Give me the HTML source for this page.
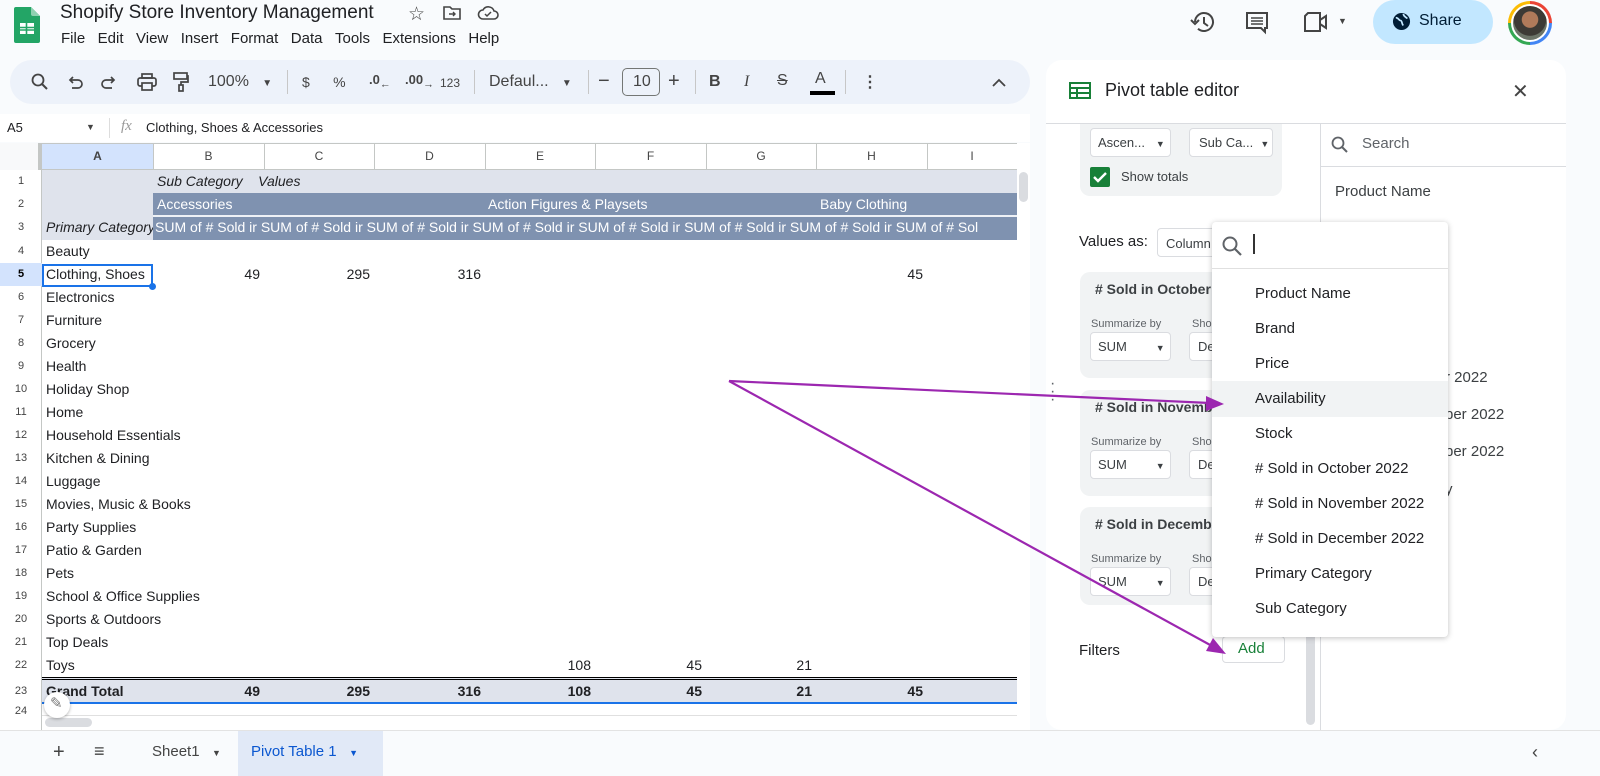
<!DOCTYPE html>
<html><head><meta charset="utf-8"><style>
*{box-sizing:border-box;margin:0;padding:0}
body{width:1600px;height:776px;overflow:hidden;background:#f9fbfd;font-family:"Liberation Sans",Arial,sans-serif;position:relative;color:#202124}
.a{position:absolute}
.t{position:absolute;white-space:nowrap}
.cell{position:absolute;font-size:14px;line-height:23px;white-space:nowrap;overflow:hidden}
.ic{position:absolute}
</style></head><body>
<svg class="ic" style="left:14px;top:7px" width="26" height="36" viewBox="0 0 26 36"><path d="M2 0h15l9 9v25a2 2 0 0 1-2 2H2a2 2 0 0 1-2-2V2a2 2 0 0 1 2-2z" fill="#23a566"/><path d="M17 0l9 9h-7a2 2 0 0 1-2-2z" fill="#8ed1b1"/><rect x="6" y="16" width="14" height="11" fill="#fff"/><path d="M6 20.5h14M6 23h14M12.5 16v11" stroke="#23a566" stroke-width="1.6"/></svg>
<div class="t" style="left:60px;top:2px;font-size:19px">Shopify Store Inventory Management</div>
<div class="t" style="left:408px;top:3px;font-size:19px;color:#444">☆</div>
<svg class="ic" style="left:443px;top:6px" width="18" height="14" viewBox="0 0 18 14"><path d="M1 1h6l2 2h8v10H1z" fill="none" stroke="#444" stroke-width="1.6"/><path d="M6 8h6M10 6l2 2-2 2" fill="none" stroke="#444" stroke-width="1.4"/></svg>
<svg class="ic" style="left:477px;top:5px" width="22" height="15" viewBox="0 0 22 15"><path d="M6 14h11a4 4 0 0 0 0-8 6 6 0 0 0-11-1 4.5 4.5 0 0 0 0 9z" fill="none" stroke="#444" stroke-width="1.6"/><path d="M8 9l2 2 4-4" fill="none" stroke="#444" stroke-width="1.5"/></svg>
<div class="t" style="left:61px;top:30px;font-size:15px">File&nbsp;&nbsp;&nbsp;Edit&nbsp;&nbsp;&nbsp;View&nbsp;&nbsp;&nbsp;Insert&nbsp;&nbsp;&nbsp;Format&nbsp;&nbsp;&nbsp;Data&nbsp;&nbsp;&nbsp;Tools&nbsp;&nbsp;&nbsp;Extensions&nbsp;&nbsp;&nbsp;Help</div>
<svg class="ic" style="left:1190px;top:10px" width="26" height="24" viewBox="0 0 26 24"><path d="M5 12a9 9 0 1 1 3 6.7" fill="none" stroke="#444" stroke-width="2"/><path d="M1 10l4 4 4-4" fill="none" stroke="#444" stroke-width="2"/><path d="M14 7v6l4 3" fill="none" stroke="#444" stroke-width="2"/></svg>
<svg class="ic" style="left:1245px;top:11px" width="24" height="24" viewBox="0 0 24 24"><path d="M2 2h20v15h-2v4l-4-4H2z" fill="none" stroke="#444" stroke-width="2"/><path d="M6 7h12M6 10h12M6 13h12" stroke="#444" stroke-width="1.6"/></svg>
<svg class="ic" style="left:1303px;top:12px" width="26" height="20" viewBox="0 0 26 20"><path d="M2 4l3-3h12v18H2z" fill="none" stroke="#444" stroke-width="2"/><path d="M17 8l6-4v12l-6-4" fill="none" stroke="#444" stroke-width="2"/></svg>
<div class="t" style="left:1338px;top:16px;font-size:9px;color:#444">▼</div>
<div class="a" style="left:1373px;top:0;width:120px;height:44px;border-radius:22px;background:#c2e7ff"></div>
<svg class="ic" style="left:1392px;top:12px" width="19" height="19" viewBox="0 0 20 20"><circle cx="10" cy="10" r="9" fill="#001d35"/><path d="M4 6c3 0 3 3 5 3s1 4 3 5M12 2c0 3 3 3 4 5" fill="none" stroke="#c2e7ff" stroke-width="1.8"/></svg>
<div class="t" style="left:1419px;top:12px;font-size:16px;color:#001d35">Share</div>
<div class="a" style="left:1508px;top:1px;width:44px;height:44px;border-radius:50%;background:conic-gradient(#ea4335 0 25%,#4285f4 25% 50%,#34a853 50% 75%,#fbbc05 75%)"></div>
<div class="a" style="left:1511px;top:4px;width:38px;height:38px;border-radius:50%;background:#fff"></div>
<div class="a" style="left:1513px;top:6px;width:34px;height:34px;border-radius:50%;background:radial-gradient(circle at 50% 40%,#b07a5a 0 30%,#3d3a35 32% 60%,#6c7468 62%)"></div>
<div class="a" style="left:10px;top:60px;width:1020px;height:44px;border-radius:22px;background:#edf2fa"></div>
<svg class="ic" style="left:30px;top:72px" width="20" height="20" viewBox="0 0 20 20"><circle cx="8" cy="8" r="5.5" fill="none" stroke="#444" stroke-width="1.8"/><path d="M12 12l5 5" stroke="#444" stroke-width="2"/></svg>
<svg class="ic" style="left:67px;top:75px" width="50" height="16" viewBox="0 0 50 16"><path d="M4 5h7a4 4 0 0 1 0 8H5M6 2L3 5l3 3" fill="none" stroke="#444" stroke-width="1.7"/><path d="M46 5h-7a4 4 0 0 0 0 8h6M44 2l3 3-3 3" fill="none" stroke="#444" stroke-width="1.7"/></svg>
<svg class="ic" style="left:137px;top:73px" width="20" height="18" viewBox="0 0 20 18"><rect x="5" y="1" width="10" height="4" fill="none" stroke="#444" stroke-width="1.7"/><rect x="1" y="5" width="18" height="8" rx="2" fill="none" stroke="#444" stroke-width="1.7"/><rect x="5" y="10" width="10" height="7" fill="#edf2fa" stroke="#444" stroke-width="1.7"/></svg>
<svg class="ic" style="left:173px;top:72px" width="16" height="20" viewBox="0 0 16 20"><rect x="1" y="1" width="13" height="6" fill="none" stroke="#444" stroke-width="1.7"/><path d="M14 4h1v6H8v3" fill="none" stroke="#444" stroke-width="1.7"/><rect x="6" y="13" width="4" height="6" fill="none" stroke="#444" stroke-width="1.7"/></svg>
<div class="t" style="left:208px;top:73px;font-size:16px;color:#444">100%&nbsp;&nbsp;&nbsp;<span style="font-size:10px">▼</span></div>
<div class="a" style="left:287px;top:70px;width:1px;height:24px;background:#c7c7c7"></div>
<div class="t" style="left:302px;top:74px;font-size:14px;color:#444">$&nbsp;&nbsp;&nbsp;&nbsp;&nbsp;&nbsp;%</div>
<div class="t" style="left:369px;top:72px;font-size:13px;color:#444;font-weight:bold">.0<sub>←</sub></div>
<div class="t" style="left:405px;top:72px;font-size:13px;color:#444;font-weight:bold">.00<sub>→</sub></div>
<div class="t" style="left:440px;top:76px;font-size:12px;color:#444">123</div>
<div class="a" style="left:474px;top:70px;width:1px;height:24px;background:#c7c7c7"></div>
<div class="t" style="left:489px;top:73px;font-size:16px;color:#444">Defaul...&nbsp;&nbsp;&nbsp;<span style="font-size:10px">▼</span></div>
<div class="a" style="left:588px;top:70px;width:1px;height:24px;background:#c7c7c7"></div>
<div class="t" style="left:598px;top:70px;font-size:20px;color:#444">−</div>
<div class="a" style="left:622px;top:68px;width:38px;height:28px;border:1px solid #747775;border-radius:5px"></div>
<div class="t" style="left:633px;top:73px;font-size:16px;color:#444">10</div>
<div class="t" style="left:668px;top:70px;font-size:20px;color:#444">+</div>
<div class="a" style="left:695px;top:70px;width:1px;height:24px;background:#c7c7c7"></div>
<div class="t" style="left:709px;top:73px;font-size:16px;color:#444;font-weight:bold">B</div>
<div class="t" style="left:744px;top:73px;font-size:16px;color:#444;font-style:italic;font-family:'Liberation Serif'">I</div>
<div class="t" style="left:777px;top:72px;font-size:16px;color:#444;text-decoration:line-through">S</div>
<div class="t" style="left:815px;top:70px;font-size:16px;color:#444">A</div>
<div class="a" style="left:810px;top:91px;width:25px;height:4px;background:#000"></div>
<div class="a" style="left:845px;top:70px;width:1px;height:24px;background:#c7c7c7"></div>
<div class="t" style="left:862px;top:72px;font-size:16px;color:#444;font-weight:bold">⋮</div>
<svg class="ic" style="left:992px;top:78px" width="14" height="9"><path d="M1 8l6-6 6 6" fill="none" stroke="#444" stroke-width="1.8"/></svg>
<div class="a" style="left:0;top:114px;width:1030px;height:28px;background:#fff"></div>
<div class="t" style="left:7px;top:120px;font-size:13px">A5</div>
<div class="t" style="left:86px;top:122px;font-size:9px;color:#444">▼</div>
<div class="a" style="left:109px;top:118px;width:1px;height:20px;background:#ddd"></div>
<div class="t" style="left:121px;top:118px;font-size:15px;color:#999;font-style:italic;font-family:'Liberation Serif'">fx</div>
<div class="t" style="left:146px;top:120px;font-size:13px">Clothing, Shoes &amp; Accessories</div>
<div class="a" style="left:0;top:143px;width:1030px;height:587px;background:#fff"></div>
<div class="a" style="left:0;top:143px;width:1017px;height:27px;background:#fff;border-top:1px solid #c4c7c5;border-bottom:1px solid #c4c7c5"></div>
<div class="a" style="left:0;top:143px;width:42px;height:27px;background:#f8f9fa;border-right:4px solid #c4c7c5"></div>
<div class="a" style="left:42px;top:144px;width:111px;height:25px;background:#d3e3fd"></div>
<div id="cols"></div>
<div class="a" style="left:0;top:170px;width:42px;height:560px;background:#fff;border-right:1px solid #c4c7c5"></div>
<div class="a" style="left:42px;top:170px;width:111px;height:70px;background:#dfe3ec"></div>
<div class="a" style="left:153px;top:170px;width:864px;height:23px;background:#dfe3ec"></div>
<div class="a" style="left:153px;top:193px;width:864px;height:47px;background:#7f92b0"></div>
<div class="a" style="left:153px;top:215px;width:864px;height:2px;background:#eef1f6"></div>
<div class="a" style="left:42px;top:677px;width:975px;height:26px;background:#dfe3ec;border-top:3px double #000"></div>
<div class="a" style="left:42px;top:702px;width:975px;height:2px;background:#1a73e8"></div>
<div class="a" style="left:42px;top:264px;width:111px;height:23px;border:2px solid #1a73e8"></div>
<div class="a" style="left:149px;top:283px;width:7px;height:7px;border-radius:50%;background:#1a73e8"></div>
<div class="cell" style="left:157px;top:170px;font-style:italic">Sub Category&nbsp;&nbsp;&nbsp;&nbsp;Values</div>
<div class="cell" style="left:157px;top:193px;color:#fff">Accessories</div>
<div class="cell" style="left:488px;top:193px;color:#fff">Action Figures &amp; Playsets</div>
<div class="cell" style="left:820px;top:193px;color:#fff">Baby Clothing</div>
<div class="cell" style="left:46px;top:216px;width:107px;font-style:italic">Primary Category</div>
<div class="cell" style="left:155px;top:216px;width:862px;color:#fff">SUM of # Sold ir SUM of # Sold ir SUM of # Sold ir SUM of # Sold ir SUM of # Sold ir SUM of # Sold ir SUM of # Sold ir SUM of # Sol</div>
<div id="rows"></div>
<div class="a" style="left:1019px;top:172px;width:9px;height:30px;border-radius:5px;background:#dadce0"></div>
<div class="a" style="left:42px;top:715px;width:975px;height:15px;background:#fff;border-top:1px solid #e0e0e0"></div>
<div class="a" style="left:45px;top:718px;width:47px;height:9px;border-radius:5px;background:#dadce0"></div>
<div class="a" style="left:44px;top:692px;width:26px;height:26px;border-radius:50%;background:#fff;box-shadow:0 1px 3px rgba(0,0,0,.3)"></div>
<div class="t" style="left:50px;top:694px;font-size:15px;color:#777">✎</div>
<div class="a" style="left:0;top:730px;width:1600px;height:46px;background:#f9fbfd;border-top:1px solid #e3e3e3"></div>
<div class="t" style="left:53px;top:741px;font-size:20px;color:#444">+</div>
<div class="t" style="left:94px;top:741px;font-size:18px;color:#444">≡</div>
<div class="t" style="left:152px;top:743px;font-size:15px;color:#444">Sheet1&nbsp;&nbsp;&nbsp;<span style="font-size:9px">▼</span></div>
<div class="a" style="left:238px;top:731px;width:145px;height:45px;background:#e1e9f7"></div>
<div class="t" style="left:251px;top:743px;font-size:15px;color:#0b57d0">Pivot Table 1&nbsp;&nbsp;&nbsp;<span style="font-size:9px">▼</span></div>
<div class="t" style="left:1532px;top:742px;font-size:18px;color:#444">‹</div>
<div class="a" style="left:1046px;top:60px;width:520px;height:670px;background:#fff;border-radius:16px"></div>
<svg class="ic" style="left:1069px;top:82px" width="22" height="17" viewBox="0 0 22 17"><rect x="1" y="1" width="20" height="15" fill="none" stroke="#188038" stroke-width="2"/><path d="M1 6h20M1 11h20M8 6v10" stroke="#188038" stroke-width="2"/></svg>
<div class="t" style="left:1105px;top:80px;font-size:18px">Pivot table editor</div>
<div class="t" style="left:1512px;top:79px;font-size:20px;color:#444">✕</div>
<div class="a" style="left:1046px;top:123px;width:520px;height:1px;background:#dadce0"></div>
<div class="a" style="left:1320px;top:124px;width:1px;height:606px;background:#dadce0"></div>
<div class="a" style="left:1321px;top:166px;width:245px;height:1px;background:#dadce0"></div>
<svg class="ic" style="left:1330px;top:135px" width="20" height="20" viewBox="0 0 20 20"><circle cx="8" cy="8" r="5.5" fill="none" stroke="#5f6368" stroke-width="1.8"/><path d="M12 12l5 5" stroke="#5f6368" stroke-width="2"/></svg>
<div class="t" style="left:1362px;top:135px;font-size:15px;color:#5f6368">Search</div>
<div class="t" style="left:1335px;top:183px;font-size:15px;color:#3c4043">Product Name</div>
<div class="t" style="left:1445px;top:369px;font-size:15px;color:#3c4043">r 2022</div>
<div class="t" style="left:1445px;top:406px;font-size:15px;color:#3c4043">ber 2022</div>
<div class="t" style="left:1445px;top:443px;font-size:15px;color:#3c4043">ber 2022</div>
<div class="t" style="left:1445px;top:481px;font-size:15px;color:#3c4043">y</div>
<div class="a" style="left:1080px;top:124px;width:202px;height:72px;background:#f1f3f4;border-radius:0 0 10px 10px"></div>
<div class="a" style="left:1090px;top:128px;width:81px;height:29px;background:#fff;border:1px solid #dadce0;border-radius:4px"></div>
<div class="t" style="left:1098px;top:135px;font-size:13px;color:#3c4043">Ascen...&nbsp;&nbsp;&nbsp;<span style="font-size:9px">▼</span></div>
<div class="a" style="left:1189px;top:128px;width:84px;height:29px;background:#fff;border:1px solid #dadce0;border-radius:4px"></div>
<div class="t" style="left:1199px;top:135px;font-size:13px;color:#3c4043">Sub Ca...&nbsp;&nbsp;<span style="font-size:9px">▼</span></div>
<div class="a" style="left:1090px;top:167px;width:20px;height:20px;background:#188038;border-radius:2px"></div>
<svg class="ic" style="left:1090px;top:167px" width="20" height="20"><path d="M4 10l4 4 8-8" fill="none" stroke="#fff" stroke-width="2.4"/></svg>
<div class="t" style="left:1121px;top:169px;font-size:13px;color:#3c4043">Show totals</div>
<div class="t" style="left:1079px;top:233px;font-size:15px">Values as:</div>
<div class="a" style="left:1157px;top:228px;width:60px;height:29px;background:#fff;border:1px solid #dadce0;border-radius:4px"></div>
<div class="t" style="left:1166px;top:236px;font-size:13px;color:#3c4043">Column</div>
<div id="cards"></div>
<div class="t" style="left:1050px;top:380px;font-size:16px;color:#5f6368;line-height:8px">·<br>·<br>·</div>
<div class="t" style="left:1079px;top:642px;font-size:15px">Filters</div>
<div class="a" style="left:1222px;top:636px;width:63px;height:27px;border:1px solid #dadce0;border-radius:4px"></div>
<div class="t" style="left:1238px;top:640px;font-size:15px;color:#188038">Add</div>
<div class="a" style="left:1306px;top:380px;width:9px;height:345px;border-radius:5px;background:#dadce0"></div>
<div class="a" style="left:1212px;top:222px;width:236px;height:415px;background:#fff;border-radius:4px;box-shadow:0 1px 6px rgba(0,0,0,.25)"></div>
<div class="a" style="left:1212px;top:268px;width:236px;height:1px;background:#e0e0e0"></div>
<svg class="ic" style="left:1221px;top:235px" width="22" height="22" viewBox="0 0 22 22"><circle cx="9" cy="9" r="6.5" fill="none" stroke="#5f6368" stroke-width="2"/><path d="M14 14l6 6" stroke="#5f6368" stroke-width="2.2"/></svg>
<div class="a" style="left:1253px;top:234px;width:1.5px;height:20px;background:#333"></div>
<div class="a" style="left:1212px;top:381px;width:236px;height:36px;background:#f1f3f4"></div>
<div id="items"></div>
<svg class="ic" style="left:0;top:0" width="1600" height="776"><g stroke="#9c27b0" stroke-width="2.2" fill="#9c27b0"><line x1="729" y1="381" x2="1210" y2="403"/><polygon points="1224,404 1206,396 1206,411" stroke="none"/><line x1="729" y1="381" x2="1212" y2="646"/><polygon points="1226,654 1213,638 1206,651" stroke="none"/></g></svg>
<script>
var cx=[42,153,264,374,485,595,706,816,927,1017],L="ABCDEFGHI",h="";
for(var i=0;i<9;i++){h+='<div class="cell" style="left:'+cx[i]+'px;top:145px;width:'+(cx[i+1]-cx[i])+'px;text-align:center;font-size:12px;color:#444;'+(i==0?'font-weight:bold;':'')+'">'+L[i]+'</div>';if(i>0)h+='<div class="a" style="left:'+cx[i]+'px;top:144px;width:1px;height:26px;background:#c4c7c5"></div>';}
document.getElementById('cols').innerHTML=h;
var names=["Beauty","Clothing, Shoes","Electronics","Furniture","Grocery","Health","Holiday Shop","Home","Household Essentials","Kitchen & Dining","Luggage","Movies, Music & Books","Party Supplies","Patio & Garden","Pets","School & Office Supplies","Sports & Outdoors","Top Deals","Toys"];
h="";var tops=[170,193,216];for(var r=0;r<19;r++)tops.push(240+r*23);tops.push(680);tops.push(700);
for(var r=0;r<24;r++){var t=tops[r];h+='<div class="cell" style="left:0;top:'+t+'px;width:42px;text-align:center;font-size:11px;color:#444;'+(r==4?'font-weight:bold;color:#000;background:#d3e3fd;':'')+'">'+(r+1)+'</div>';}
for(var r=0;r<19;r++)h+='<div class="cell" style="left:46px;top:'+(240+r*23)+'px;'+(r==1?'width:104px;':'')+'">'+names[r].replace('&','&amp;')+'</div>';
function num(c,t,v,b){h+='<div class="cell" style="left:'+cx[c]+'px;top:'+t+'px;width:'+(cx[c+1]-cx[c]-4)+'px;text-align:right;'+(b?'font-weight:bold;':'')+'">'+v+'</div>';}
num(1,263,49);num(2,263,295);num(3,263,316);num(7,263,45);
num(4,654,108);num(5,654,45);num(6,654,21);
var gt=[0,49,295,316,108,45,21,45];for(var c=1;c<8;c++)num(c,680,gt[c],1);
h+='<div class="cell" style="left:46px;top:680px;font-weight:bold">Grand Total</div>';
document.getElementById('rows').innerHTML=h;
h="";var cards=[[272,"# Sold in October"],[390,"# Sold in November"],[507,"# Sold in December"]];
cards.forEach(function(c){var t=c[0];h+='<div class="a" style="left:1080px;top:'+t+'px;width:202px;height:'+(c[0]==507?98:106)+'px;background:#f1f3f4;border-radius:10px"></div><div class="t" style="left:1095px;top:'+(t+9)+'px;font-size:14px;font-weight:bold;color:#3c4043">'+c[1]+'</div><div class="t" style="left:1091px;top:'+(t+46)+'px;font-size:11px;color:#5f6368">Summarize by</div><div class="t" style="left:1192px;top:'+(t+46)+'px;font-size:11px;color:#5f6368">Sho</div><div class="a" style="left:1090px;top:'+(t+60)+'px;width:81px;height:29px;background:#fff;border:1px solid #dadce0;border-radius:4px"></div><div class="t" style="left:1098px;top:'+(t+67)+'px;font-size:13px;color:#3c4043">SUM&nbsp;&nbsp;&nbsp;&nbsp;&nbsp;&nbsp;&nbsp;&nbsp;<span style="font-size:9px">▼</span></div><div class="a" style="left:1189px;top:'+(t+60)+'px;width:40px;height:29px;background:#fff;border:1px solid #dadce0;border-radius:4px"></div><div class="t" style="left:1198px;top:'+(t+67)+'px;font-size:13px;color:#3c4043">De</div>';});
document.getElementById('cards').innerHTML=h;
h="";var it=["Product Name","Brand","Price","Availability","Stock","# Sold in October 2022","# Sold in November 2022","# Sold in December 2022","Primary Category","Sub Category"];
it.forEach(function(s,i){h+='<div class="t" style="left:1255px;top:'+(285+i*35)+'px;font-size:15px;color:#202124">'+s+'</div>';});
document.getElementById('items').innerHTML=h;
</script>
</body></html>
